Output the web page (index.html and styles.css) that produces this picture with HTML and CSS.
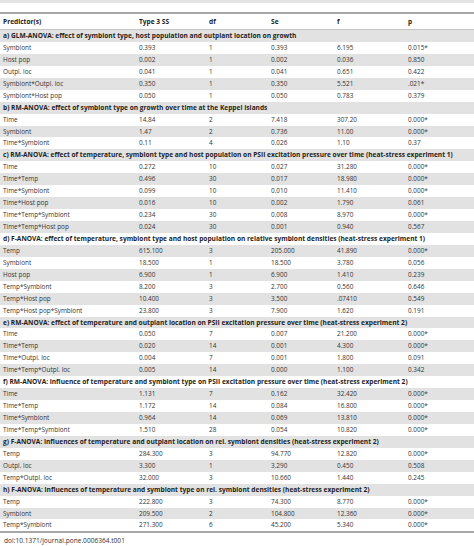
FILE: index.html
```html
<!DOCTYPE html>
<html>
<head>
<meta charset="utf-8">
<link rel="stylesheet" href="styles.css">
</head>
<body>
<div class="topband"></div>
<table class="anova">
<colgroup>
<col class="c1"><col class="c2"><col class="c3"><col class="c4"><col class="c5"><col class="c6">
</colgroup>
<thead>
<tr><th>Predictor(s)</th><th>Type 3 SS</th><th>df</th><th>Se</th><th>f</th><th>p</th></tr>
</thead>
<tbody>
<tr class="sec"><td colspan="6">a) GLM-ANOVA: effect of symbiont type, host population and outplant location on growth</td></tr>
<tr><td>Symbiont</td><td>0.393</td><td>1</td><td>0.393</td><td>6.195</td><td>0.015*</td></tr>
<tr><td>Host pop</td><td>0.002</td><td>1</td><td>0.002</td><td>0.036</td><td>0.850</td></tr>
<tr><td>Outpl. loc</td><td>0.041</td><td>1</td><td>0.041</td><td>0.651</td><td>0.422</td></tr>
<tr><td>Symbiont*Outpl. loc</td><td>0.350</td><td>1</td><td>0.350</td><td>5.521</td><td>.021*</td></tr>
<tr><td>Symbiont*Host pop</td><td>0.050</td><td>1</td><td>0.050</td><td>0.783</td><td>0.379</td></tr>
<tr class="sec"><td colspan="6">b) RM-ANOVA: effect of symbiont type on growth over time at the Keppel Islands</td></tr>
<tr><td>Time</td><td>14.84</td><td>2</td><td>7.418</td><td>307.20</td><td>0.000*</td></tr>
<tr><td>Symbiont</td><td>1.47</td><td>2</td><td>0.736</td><td>11.00</td><td>0.000*</td></tr>
<tr><td>Time*Symbiont</td><td>0.11</td><td>4</td><td>0.026</td><td>1.10</td><td>0.37</td></tr>
<tr class="sec"><td colspan="6">c) RM-ANOVA: effect of temperature, symbiont type and host population on PSII excitation pressure over time (heat-stress experiment 1)</td></tr>
<tr><td>Time</td><td>0.272</td><td>10</td><td>0.027</td><td>31.280</td><td>0.000*</td></tr>
<tr><td>Time*Temp</td><td>0.496</td><td>30</td><td>0.017</td><td>18.980</td><td>0.000*</td></tr>
<tr><td>Time*Symbiont</td><td>0.099</td><td>10</td><td>0.010</td><td>11.410</td><td>0.000*</td></tr>
<tr><td>Time*Host pop</td><td>0.016</td><td>10</td><td>0.002</td><td>1.790</td><td>0.061</td></tr>
<tr><td>Time*Temp*Symbiont</td><td>0.234</td><td>30</td><td>0.008</td><td>8.970</td><td>0.000*</td></tr>
<tr><td>Time*Temp*Host pop</td><td>0.024</td><td>30</td><td>0.001</td><td>0.940</td><td>0.567</td></tr>
<tr class="sec"><td colspan="6">d) F-ANOVA: effect of temperature, symbiont type and host population on relative symbiont densities (heat-stress experiment 1)</td></tr>
<tr><td>Temp</td><td>615.100</td><td>3</td><td>205.000</td><td>41.890</td><td>0.000*</td></tr>
<tr><td>Symbiont</td><td>18.500</td><td>1</td><td>18.500</td><td>3.780</td><td>0.056</td></tr>
<tr><td>Host pop</td><td>6.900</td><td>1</td><td>6.900</td><td>1.410</td><td>0.239</td></tr>
<tr><td>Temp*Symbiont</td><td>8.200</td><td>3</td><td>2.700</td><td>0.560</td><td>0.646</td></tr>
<tr><td>Temp*Host pop</td><td>10.400</td><td>3</td><td>3.500</td><td>.07410</td><td>0.549</td></tr>
<tr><td>Temp*Host pop*Symbiont</td><td>23.800</td><td>3</td><td>7.900</td><td>1.620</td><td>0.191</td></tr>
<tr class="sec"><td colspan="6">e) RM-ANOVA: effect of temperature and outplant location on PSII excitation pressure over time (heat-stress experiment 2)</td></tr>
<tr><td>Time</td><td>0.050</td><td>7</td><td>0.007</td><td>21.200</td><td>0.000*</td></tr>
<tr><td>Time*Temp</td><td>0.020</td><td>14</td><td>0.001</td><td>4.300</td><td>0.000*</td></tr>
<tr><td>Time*Outpl. loc</td><td>0.004</td><td>7</td><td>0.001</td><td>1.800</td><td>0.091</td></tr>
<tr><td>Time*Temp*Outpl. loc</td><td>0.005</td><td>14</td><td>0.000</td><td>1.100</td><td>0.342</td></tr>
<tr class="sec"><td colspan="6">f) RM-ANOVA: influence of temperature and symbiont type on PSII excitation pressure over time (heat-stress experiment 2)</td></tr>
<tr><td>Time</td><td>1.131</td><td>7</td><td>0.162</td><td>32.420</td><td>0.000*</td></tr>
<tr><td>Time*Temp</td><td>1.172</td><td>14</td><td>0.084</td><td>16.800</td><td>0.000*</td></tr>
<tr><td>Time*Symbiont</td><td>0.964</td><td>14</td><td>0.069</td><td>13.810</td><td>0.000*</td></tr>
<tr><td>Time*Temp*Symbiont</td><td>1.510</td><td>28</td><td>0.054</td><td>10.820</td><td>0.000*</td></tr>
<tr class="sec"><td colspan="6">g) F-ANOVA: influences of temperature and outplant location on rel. symbiont densities (heat-stress experiment 2)</td></tr>
<tr><td>Temp</td><td>284.300</td><td>3</td><td>94.770</td><td>12.820</td><td>0.000*</td></tr>
<tr><td>Outpl. loc</td><td>3.300</td><td>1</td><td>3.290</td><td>0.450</td><td>0.508</td></tr>
<tr><td>Temp*Outpl. loc</td><td>32.000</td><td>3</td><td>10.660</td><td>1.440</td><td>0.245</td></tr>
<tr class="sec"><td colspan="6">h) F-ANOVA: influences of temperature and symbiont type on rel. symbiont densities (heat-stress experiment 2)</td></tr>
<tr><td>Temp</td><td>222.800</td><td>3</td><td>74.300</td><td>8.770</td><td>0.000*</td></tr>
<tr><td>Symbiont</td><td>209.500</td><td>2</td><td>104.800</td><td>12.360</td><td>0.000*</td></tr>
<tr><td>Temp*Symbiont</td><td>271.300</td><td>6</td><td>45.200</td><td>5.340</td><td>0.000*</td></tr>
</tbody>
</table>
<p class="doi">doi:10.1371/journal.pone.0006364.t001</p>
</body>
</html>
```

FILE: styles.css
```css
html, body {
  margin: 0;
  padding: 0;
  background: #ffffff;
}
body {
  font-family: "Open Sans", "DejaVu Sans", sans-serif;
  color: #333333;
  width: 474px;
}
.topband {
  height: 3px;
  background: #e4e4e4;
  margin-bottom: 9px;
}
.anova {
  width: 474px;
  border-collapse: collapse;
  table-layout: fixed;
  font-size: 6.4px;
  border-top: 2px solid #a6a6a6;
  border-bottom: 2px solid #a6a6a6;
}
.c1 { width: 136px; }
.c2 { width: 70px; }
.c3 { width: 62px; }
.c4 { width: 66px; }
.c5 { width: 71px; }
.c6 { width: 69px; }
.anova th {
  height: 15px;
  padding: 0 0 0 3px;
  text-align: left;
  font-size: 6.6px;
  font-weight: 700;
  color: #222222;
  border-bottom: 1px solid #c4c4c4;
  white-space: nowrap;
  overflow: hidden;
}
.anova td {
  height: 11.93px;
  line-height: 11.93px;
  padding: 0 0 0 3px;
  white-space: nowrap;
  overflow: hidden;
  vertical-align: middle;
}
.anova tbody tr:nth-child(odd) {
  background: #e2e2e2;
}
.anova tr.sec td {
  font-size: 6.6px;
  font-weight: 700;
  color: #1e1e1e;
}
.doi {
  margin: 3px 0 0 4px;
  font-size: 6.6px;
  line-height: 9px;
  color: #333333;
}
```
